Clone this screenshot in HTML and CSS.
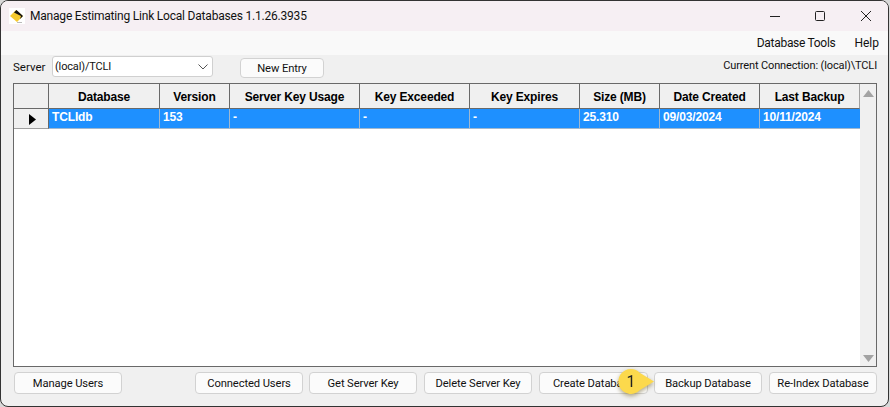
FILE: index.html
```html
<!DOCTYPE html>
<html lang="en">
<head>
<meta charset="utf-8">
<title>Manage Estimating Link Local Databases</title>
<link rel="stylesheet" href="styles.css">
</head>
<body>
<div class="window">
  <header class="titlebar">
    <svg class="logo" width="16" height="16" viewBox="0 0 16 16"><rect width="16" height="16" fill="#fff"/><path d="M1 8 7 2l7 6-6 6z" fill="#f5c92c"/><path d="M5 4.500 7.500 2 14 8l-3 3 1-3z" fill="#111"/><path d="M8 14.500h5v.6H8z" fill="#777"/></svg>
    <span class="title">Manage Estimating Link Local Databases 1.1.26.3935</span>
    <div class="caption">
      <svg width="46" height="31" viewBox="0 0 46 31"><path d="M20 15.500h10" stroke="#222" fill="none"/></svg>
      <svg width="46" height="31" viewBox="0 0 46 31"><rect x="19.500" y="10.500" width="9" height="9" rx="1" stroke="#222" fill="none"/></svg>
      <svg width="46" height="31" viewBox="0 0 46 31"><path d="M19 10l10 10M29 10 19 20" stroke="#222" fill="none"/></svg>
    </div>
  </header>
  <nav class="menubar"><span class="menu-tools">Database Tools</span><span>Help</span></nav>
  <div class="toolbar">
    <label class="server-label">Server</label>
    <div class="combo"><span>(local)/TCLI</span><svg width="10" height="6" viewBox="0 0 10 6"><path d="M.5.5 5 5 9.500.5" stroke="#555" fill="none"/></svg></div>
    <button class="btn new-entry">New Entry</button>
    <span class="connection">Current Connection: (local)\TCLI</span>
  </div>
  <div class="grid-frame">
    <div class="grid">
      <div class="row head">
        <div class="cell rowhead"></div>
        <div class="cell c1">Database</div><div class="cell c2">Version</div><div class="cell c3">Server Key Usage</div><div class="cell c4">Key Exceeded</div><div class="cell c5">Key Expires</div><div class="cell c6">Size (MB)</div><div class="cell c7">Date Created</div><div class="cell c8">Last Backup</div>
      </div>
      <div class="row sel">
        <div class="cell rowhead"><svg width="7" height="11" viewBox="0 0 7 11"><path d="M0 0l7 5.500L0 11z" fill="#000"/></svg></div>
        <div class="cell c1">TCLIdb</div><div class="cell c2">153</div><div class="cell c3">-</div><div class="cell c4">-</div><div class="cell c5">-</div><div class="cell c6">25.310</div><div class="cell c7">09/03/2024</div><div class="cell c8">10/11/2024</div>
      </div>
    </div>
    <div class="scrollbar">
      <svg width="11" height="7" viewBox="0 0 11 7"><path d="M5.500 0 11 7H0z" fill="#a3a3a3"/></svg>
      <svg width="11" height="7" viewBox="0 0 11 7"><path d="M5.500 7 11 0H0z" fill="#a3a3a3"/></svg>
    </div>
  </div>
  <footer class="actions">
    <button class="btn">Manage Users</button>
    <div class="action-group">
      <button class="btn">Connected Users</button>
      <button class="btn gap-small">Get Server Key</button>
      <button class="btn">Delete Server Key</button>
      <button class="btn">Create Database</button>
      <button class="btn gap-small">Backup Database</button>
      <button class="btn">Re-Index Database</button>
    </div>
  </footer>
  <div class="callout">
    <svg width="44" height="32" viewBox="0 0 44 32"><path d="M15 3a12.500 12.500 0 0 1 9 4l14 8.500-14 8.500A12.500 12.500 0 1 1 15 3z" fill="#fcd94c"/></svg>
    <span>1</span>
  </div>
</div>
</body>
</html>
```
FILE: styles.css
```css
* { box-sizing: border-box; }
html, body { margin: 0; height: 100%; }
body { background: #d8d8d8; font-family: Roboto, "Noto Sans", sans-serif; font-size: 12px; color: #111; overflow: hidden; }
.window { position: relative; width: 889px; height: 407px; background: #f0f0f0; border: 1px solid #333; border-radius: 8px; overflow: hidden; display: flex; flex-direction: column; }
.titlebar { height: 30px; background: #f6eff3; display: flex; align-items: center; padding-left: 8px; flex: none; }
.title { margin-left: 5px; font-size: 12px; letter-spacing: -0.2px; color: #111; white-space: nowrap; }
.caption { margin-left: auto; display: flex; }
.caption svg { display: block; }
.menubar { height: 24px; background: #f9f9f9; display: flex; justify-content: flex-end; align-items: center; gap: 19px; padding-right: 9px; flex: none; font-size: 12px; }
.menu-tools { letter-spacing: -0.3px; }
.toolbar { height: 28px; display: flex; align-items: flex-start; padding: 1px 11px 0 12px; flex: none; font-size: 11.500px; }
.server-label { width: 39px; line-height: 22px; }
.combo { width: 161px; height: 21px; background: #fff; border: 1px solid #d0d0d0; border-radius: 3px; display: flex; align-items: center; justify-content: space-between; padding: 0 4px 0 2px; font-size: 11px; letter-spacing: -0.15px; }
.btn { height: 22px; background: #fbfbfb; border: 1px solid #d2d2d2; border-radius: 4px; font: inherit; font-size: 11.200px; letter-spacing: -0.1px; color: #111; padding: 0; width: 108px; white-space: nowrap; }
.new-entry { width: 84px; height: 20px; margin-left: 27px; margin-top: 2px; }
.connection { margin-left: auto; line-height: 19px; font-size: 11px; letter-spacing: -0.13px; }
.grid-frame { height: 284px; margin: 0 11px 0 12px; border: 1px solid #696969; background: #fff; display: flex; flex: none; }
.grid { flex: none; width: 846px; }
.row { display: flex; }
.cell { border-right: 1px solid #a0a0a0; border-bottom: 1px solid #a0a0a0; font-family: "Liberation Sans", Arial, sans-serif; font-weight: 700; font-size: 12px; letter-spacing: -0.15px; }
.c1 { width: 111px; } .c2 { width: 70px; } .c3 { width: 130px; } .c4 { width: 110px; } .c5 { width: 110px; } .c6 { width: 80px; } .c7 { width: 100px; } .c8 { width: 100px; border-right: 0; }
.head { height: 25px; background: #f0f0f0; }
.head .cell { display: flex; align-items: center; justify-content: center; border-color: #696969; color: #000; padding-top: 2px; }
.head .c8 { border-right: 1px solid #a0a0a0; }
.rowhead { width: 35px; background: #f0f0f0; display: flex; align-items: center; justify-content: center; }
.head .rowhead { border-right-color: #696969; }
.sel { height: 20px; }
.sel .cell:not(.rowhead) { background: #1e90ff; color: #fff; padding: 0 0 3px 3px; display: flex; align-items: center; border-color: #a0b8d0; }
.sel .rowhead { border-right: 1px solid #696969; border-bottom-color: #a0a0a0; padding-top: 2px; }
.sel .rowhead svg { margin-left: 2px; }
.scrollbar { flex: 1; background: #f0f0f0; display: flex; flex-direction: column; justify-content: space-between; align-items: center; padding: 6px 0 4px; }
.scrollbar svg { display: block; }
.actions { display: flex; justify-content: space-between; padding: 5px 11px 0 13px; flex: none; }
.action-group { display: flex; gap: 7px; }
.action-group .btn:nth-child(4) { width: 109px; }
.action-group .gap-small { margin-left: -1px; }
.callout { position: absolute; left: 615px; top: 365px; width: 44px; height: 32px; filter: drop-shadow(0 2px 2px rgba(90,70,0,.45)); }
.callout svg { display: block; }
.callout span { position: absolute; left: 0; top: 6px; width: 30px; text-align: center; font-size: 16px; line-height: 19px; color: #222; }
```
